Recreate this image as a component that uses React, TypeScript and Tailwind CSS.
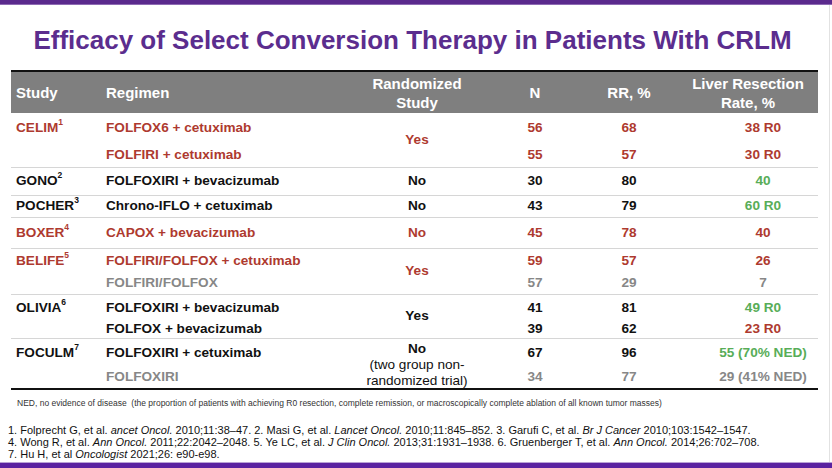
import React from "react";

const RED = "text-[#ae3a2f]";
const GREEN = "text-[#58ad58]";
const GRAY = "text-[#878787]";
const BLACK = "text-[#111111]";

const COLS = "grid grid-cols-[90px_256px_120px_116px_72px_153px]";

type Sub = {
  regimen: string;
  n: string;
  rr: string;
  lr: string;
  c: string;
  lrc: string;
};

type Group = {
  study: string;
  sup: string;
  studyColor: string;
  rand: React.ReactNode;
  randColor: string;
  rows: string;
  h: string;
  subs: Sub[];
  last?: boolean;
};

const groups: Group[] = [
  {
    study: "CELIM",
    sup: "1",
    studyColor: RED,
    rand: "Yes",
    randColor: RED,
    rows: "grid-rows-[30px_24px]",
    h: "h-[55px]",
    subs: [
      { regimen: "FOLFOX6 + cetuximab", n: "56", rr: "68", lr: "38 R0", c: RED, lrc: RED },
      { regimen: "FOLFIRI + cetuximab", n: "55", rr: "57", lr: "30 R0", c: RED, lrc: RED },
    ],
  },
  {
    study: "GONO",
    sup: "2",
    studyColor: BLACK,
    rand: "No",
    randColor: BLACK,
    rows: "grid-rows-[27px]",
    h: "h-[28px]",
    subs: [{ regimen: "FOLFOXIRI + bevacizumab", n: "30", rr: "80", lr: "40", c: BLACK, lrc: GREEN }],
  },
  {
    study: "POCHER",
    sup: "3",
    studyColor: BLACK,
    rand: "No",
    randColor: BLACK,
    rows: "grid-rows-[21px]",
    h: "h-[22px]",
    subs: [{ regimen: "Chrono-IFLO + cetuximab", n: "43", rr: "79", lr: "60 R0", c: BLACK, lrc: GREEN }],
  },
  {
    study: "BOXER",
    sup: "4",
    studyColor: RED,
    rand: "No",
    randColor: RED,
    rows: "grid-rows-[30px]",
    h: "h-[31px]",
    subs: [{ regimen: "CAPOX + bevacizumab", n: "45", rr: "78", lr: "40", c: RED, lrc: RED }],
  },
  {
    study: "BELIFE",
    sup: "5",
    studyColor: RED,
    rand: "Yes",
    randColor: RED,
    rows: "grid-rows-[24px_21px]",
    h: "h-[46px]",
    subs: [
      { regimen: "FOLFIRI/FOLFOX + cetuximab", n: "59", rr: "57", lr: "26", c: RED, lrc: RED },
      { regimen: "FOLFIRI/FOLFOX", n: "57", rr: "29", lr: "7", c: GRAY, lrc: GRAY },
    ],
  },
  {
    study: "OLIVIA",
    sup: "6",
    studyColor: BLACK,
    rand: "Yes",
    randColor: BLACK,
    rows: "grid-rows-[26px_17px]",
    h: "h-[44px]",
    subs: [
      { regimen: "FOLFOXIRI + bevacizumab", n: "41", rr: "81", lr: "49 R0", c: BLACK, lrc: GREEN },
      { regimen: "FOLFOX + bevacizumab", n: "39", rr: "62", lr: "23 R0", c: BLACK, lrc: RED },
    ],
  },
  {
    study: "FOCULM",
    sup: "7",
    studyColor: BLACK,
    rand: (
      <div className="flex flex-col items-center leading-[16px] pt-[2px]">
        <span className="font-bold">No</span>
        <span className="font-normal">(two group non-</span>
        <span className="font-normal">randomized trial)</span>
      </div>
    ),
    randColor: BLACK,
    rows: "grid-rows-[28px_21px]",
    h: "h-[51px]",
    last: true,
    subs: [
      { regimen: "FOLFOXIRI + cetuximab", n: "67", rr: "96", lr: "55 (70% NED)", c: BLACK, lrc: GREEN },
      { regimen: "FOLFOXIRI", n: "34", rr: "77", lr: "29 (41% NED)", c: GRAY, lrc: GRAY },
    ],
  },
];

function GroupRow({ g }: { g: Group }) {
  const span = g.subs.length === 2 ? "row-span-2" : "";
  return (
    <div
      className={`${COLS} ${g.rows} ${g.h} ${
        g.last ? "border-b-2 border-[#111111]" : "border-b border-[#d6d6d6]"
      } font-bold text-[13.6px]`}
    >
      {g.subs.map((s, i) => (
        <React.Fragment key={i}>
          <div className={`flex items-center pl-[5px] ${g.studyColor}`} style={{ gridRow: i + 1, gridColumn: 1 }}>
            {i === 0 && (
              <span>
                {g.study}
                <span className="inline-block align-top text-[8.5px] leading-[10px] mt-[-1px]">{g.sup}</span>
              </span>
            )}
          </div>
          <div className={`flex items-center pl-[5px] ${s.c}`} style={{ gridRow: i + 1, gridColumn: 2 }}>
            {s.regimen}
          </div>
          <div className={`flex items-center justify-center ${s.c}`} style={{ gridRow: i + 1, gridColumn: 4 }}>
            {s.n}
          </div>
          <div className={`flex items-center justify-center ${s.c}`} style={{ gridRow: i + 1, gridColumn: 5 }}>
            {s.rr}
          </div>
          <div className={`flex items-center justify-center pl-[43px] ${s.lrc}`} style={{ gridRow: i + 1, gridColumn: 6 }}>
            {s.lr}
          </div>
        </React.Fragment>
      ))}
      <div
        className={`flex items-center justify-center text-center ${span} ${g.randColor}`}
        style={{ gridColumn: 3, gridRow: g.subs.length === 2 ? "1 / span 2" : 1 }}
      >
        {g.rand}
      </div>
    </div>
  );
}

export default function App() {
  return (
    <div className="w-[832px] h-[468px] bg-white overflow-hidden flex flex-col font-['Liberation_Sans',Arial,sans-serif]">
      <div className="h-[5px] bg-[#5b2a8d] border-b border-[#8e6bb3]" />
      <div className="flex-1 flex flex-col border-r border-[#e2e2e2] w-[830px]">
        <h1 className="mt-[20px] text-center text-[26px] leading-[30px] font-bold text-[#5b2d8e] pr-[4px]">
          Efficacy of Select Conversion Therapy in Patients With CRLM
        </h1>
        <div className="mt-[15px] ml-[11px] w-[807px]">
          <div className={`${COLS} h-[43px] border-t-2 border-[#111111] bg-[#7f7f7f] text-white font-bold text-[15px] leading-[19px]`}>
            <div className="flex items-center pl-[5px]">Study</div>
            <div className="flex items-center pl-[5px]">Regimen</div>
            <div className="flex items-center justify-center text-center">
              Randomized
              <br />
              Study
            </div>
            <div className="flex items-center justify-center">N</div>
            <div className="flex items-center justify-center">RR, %</div>
            <div className="flex items-center justify-center text-center pl-[13px]">
              Liver Resection
              <br />
              Rate, %
            </div>
          </div>
          {groups.map((g) => (
            <GroupRow key={g.study} g={g} />
          ))}
        </div>
        <p className="mt-[7px] pl-[17px] text-[8.5px] leading-[12px] text-[#333333]">
          NED, no evidence of disease&nbsp; (the proportion of patients with achieving R0 resection, complete remission, or macroscopically complete ablation of all known tumor masses)
        </p>
        <div className="mt-[15px] pl-[8px] text-[11px] leading-[12px] text-[#111111]">
          <div>
            1. Folprecht G, et al. <i>ancet Oncol.</i> 2010;11:38–47. 2. Masi G, et al. <i>Lancet Oncol.</i> 2010;11:845–852. 3. Garufi C, et al. <i>Br J Cancer</i> 2010;103:1542–1547.
          </div>
          <div>
            4. Wong R, et al. <i>Ann Oncol.</i> 2011;22:2042–2048. 5. Ye LC, et al. <i>J Clin Oncol.</i> 2013;31:1931–1938. 6. Gruenberger T, et al. <i>Ann Oncol.</i> 2014;26:702–708.
          </div>
          <div>
            7. Hu H, et al <i>Oncologist</i> 2021;26: e90-e98.
          </div>
        </div>
      </div>
      <div className="h-[6px] bg-[#5a22a0] border-t border-[#b9a3d6]" />
    </div>
  );
}
